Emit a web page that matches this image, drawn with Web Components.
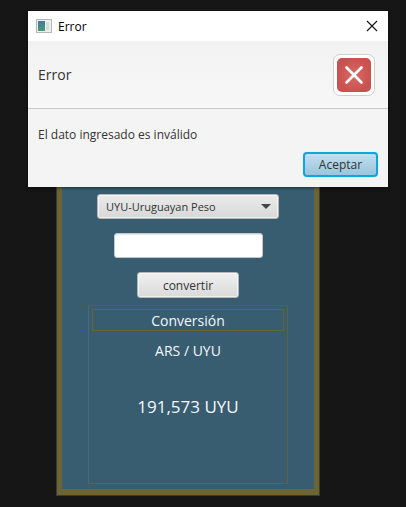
<!DOCTYPE html>
<html lang="es"><head><meta charset="utf-8"><title>Error</title>
<style>
html,body{margin:0;height:100%;background:#161616;overflow:hidden}
body{font-family:"Open Sans","Liberation Sans",sans-serif;position:relative;width:406px;height:507px}
</style></head><body>
<converter-window>
  <fx-combo slot="controls">UYU-Uruguayan Peso</fx-combo>
  <fx-input slot="controls"></fx-input>
  <fx-button slot="controls">convertir</fx-button>
  <result-panel slot="result" heading="Conversión" pair="ARS / UYU" amount="191,573 UYU"></result-panel>
</converter-window>
<error-dialog title-text="Error" heading="Error" message="El dato ingresado es inválido" action="Aceptar"></error-dialog>
<script>
function def(name, html, setup){
  customElements.define(name, class extends HTMLElement{
    constructor(){super();this.attachShadow({mode:"open"}).innerHTML=html;}
    connectedCallback(){ if(setup) setup(this); }
  });
}
const ctlBorder="border:1px solid #b4b7ba;box-shadow:inset 0 0 0 1px rgba(255,255,255,.55);box-sizing:border-box;";
def("fx-combo",`<style>
:host{display:flex;align-items:center;justify-content:space-between;width:182px;height:25px;box-sizing:border-box;padding:0 7px 0 8px;border-radius:3px;${ctlBorder}background:linear-gradient(#ebebeb,#d8d8d8);color:#333;font-size:11px}
i{width:0;height:0;border-left:5px solid transparent;border-right:5px solid transparent;border-top:5px solid #444}
</style><span><slot></slot></span><i></i>`);
def("fx-input",`<style>
:host{display:block;width:149px;height:25px;box-sizing:border-box;border-radius:3px;background:#fff;border:1px solid #c3c9cd;box-shadow:inset 0 1px 1px #e4e4e4}
</style>`);
def("fx-button",`<style>
:host{display:flex;align-items:center;justify-content:center;width:102px;height:26px;box-sizing:border-box;border-radius:3px;${ctlBorder}background:linear-gradient(#f0f0f0,#dadada);color:#333;font-size:12px}
</style><slot></slot>`);
def("result-panel",`<style>
:host{display:flex;flex-direction:column;align-items:center;box-sizing:border-box;width:200px;height:179px;padding:3px;border:1px solid #5b6548;border-color:#52604f #5f6340 #5f6340 #466a76;color:#f4f8fb}
.h{width:100%;height:22px;box-sizing:border-box;border:1px solid #6b6332;display:flex;align-items:center;justify-content:center;font-size:14px;flex:none}
.p{font-size:14px;line-height:20px;margin-top:10px}
.a{font-size:17px;line-height:24px;margin-top:34px}
</style><div class="h"></div><div class="p"></div><div class="a"></div>`,el=>{
  const r=el.shadowRoot;
  r.querySelector(".h").textContent=el.getAttribute("heading");
  r.querySelector(".p").textContent=el.getAttribute("pair");
  r.querySelector(".a").textContent=el.getAttribute("amount");
});
def("converter-window",`<style>
:host{position:absolute;left:56px;top:140px;width:264px;height:356px;box-sizing:border-box;border:1px solid #3a3a33;background:#6c6432;padding:5px 5px 6px 5px}
.in{height:100%;background:#385c70;display:flex;flex-direction:column;align-items:center;padding-top:48px;box-sizing:border-box}
.ctl{display:flex;flex-direction:column;align-items:center;gap:14px;margin-bottom:7px}
</style><div class="in"><div class="ctl"><slot name="controls"></slot></div><slot name="result"></slot></div>`);
def("error-dialog",`<style>
:host{position:absolute;left:28px;top:11px;width:360px;height:176px;display:flex;flex-direction:column;background:#f4f4f4;box-shadow:0 1px 3px rgba(0,0,0,.5);color:#333}
.bar{height:30px;flex:none;background:#fff;display:flex;align-items:center;padding:0 10px 0 8px;font-size:12px;color:#000}
.bar .t{flex:1;margin-left:6px}
.head{height:68px;flex:none;box-sizing:border-box;background:linear-gradient(#f2f2f2,#f7f7f7);border-bottom:1px solid #c8c8c8;display:flex;align-items:center;justify-content:space-between;padding:0 13px 0 10px;font-size:14px}
.ico{width:42px;height:42px;box-sizing:border-box;background:#fff;border:1px solid #cfcfcf;border-radius:7px;padding:3px;display:flex}
.ico svg{display:block}
.msg{font-size:12px;padding:17px 10px 0;flex:1}
.foot{display:flex;justify-content:flex-end;padding:0 10px 10px}
.ok{width:75px;height:25px;box-sizing:border-box;border:2px solid #0fa6db;border-radius:4px;background:linear-gradient(#bee0f0,#9cc4dc);display:flex;align-items:center;justify-content:center;font-size:12px;color:#333;box-shadow:0 0 1px #9fdcf2}
</style>
<div class="bar">
<svg width="16" height="14" viewBox="0 0 16 14"><rect x=".5" y=".5" width="15" height="13" fill="#eee" stroke="#b5b8ba"/><defs><linearGradient id="g" x1="0" y1="0" x2="0" y2="1"><stop offset="0" stop-color="#3f78a8"/><stop offset="1" stop-color="#4f9a70"/></linearGradient></defs><rect x="2" y="2" width="7" height="10" fill="url(#g)"/><rect x="10" y="3" width="3" height="8" fill="#d5dfd8"/></svg>
<span class="t"></span>
<svg width="12" height="12" viewBox="0 0 12 12"><path d="M1 1L11 11M11 1L1 11" stroke="#111" stroke-width="1.1" fill="none"/></svg>
</div>
<div class="head"><span class="h"></span><div class="ico"><svg width="34" height="34" viewBox="0 0 34 34"><defs><radialGradient id="r"><stop offset="0" stop-color="#d96a66"/><stop offset="1" stop-color="#c8524f"/></radialGradient></defs><rect width="34" height="34" rx="5" fill="url(#r)"/><path d="M9.5 9.5L24.5 24.5M24.5 9.5L9.5 24.5" stroke="#fff" stroke-width="2.6" stroke-linecap="round"/></svg></div></div>
<div class="msg"></div>
<div class="foot"><div class="ok"></div></div>`,el=>{
  const r=el.shadowRoot;
  r.querySelector(".t").textContent=el.getAttribute("title-text");
  r.querySelector(".h").textContent=el.getAttribute("heading");
  r.querySelector(".msg").textContent=el.getAttribute("message");
  r.querySelector(".ok").textContent=el.getAttribute("action");
});
</script>
</body></html>
